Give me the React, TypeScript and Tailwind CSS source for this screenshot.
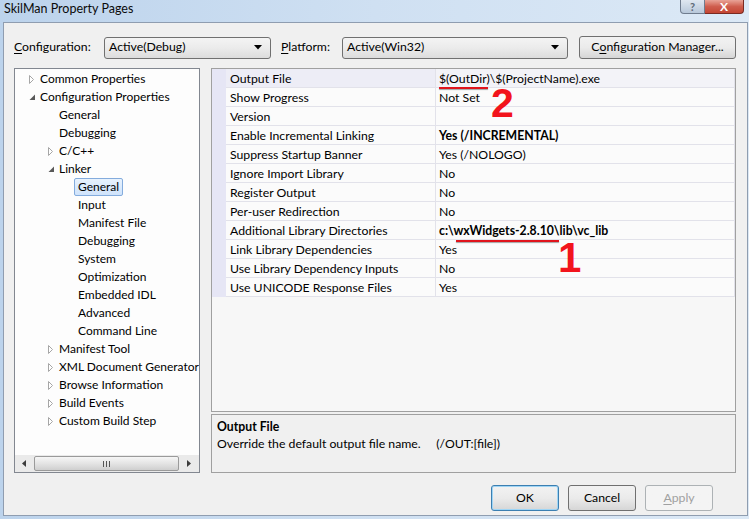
import React from "react";

type TreeItem = { label: string; level: number; exp?: "c" | "e"; sel?: boolean };

const tree: TreeItem[] = [
  { label: "Common Properties", level: 0, exp: "c" },
  { label: "Configuration Properties", level: 0, exp: "e" },
  { label: "General", level: 1 },
  { label: "Debugging", level: 1 },
  { label: "C/C++", level: 1, exp: "c" },
  { label: "Linker", level: 1, exp: "e" },
  { label: "General", level: 2, sel: true },
  { label: "Input", level: 2 },
  { label: "Manifest File", level: 2 },
  { label: "Debugging", level: 2 },
  { label: "System", level: 2 },
  { label: "Optimization", level: 2 },
  { label: "Embedded IDL", level: 2 },
  { label: "Advanced", level: 2 },
  { label: "Command Line", level: 2 },
  { label: "Manifest Tool", level: 1, exp: "c" },
  { label: "XML Document Generator", level: 1, exp: "c" },
  { label: "Browse Information", level: 1, exp: "c" },
  { label: "Build Events", level: 1, exp: "c" },
  { label: "Custom Build Step", level: 1, exp: "c" },
];

const props: { name: string; value: string; bold?: boolean }[] = [
  { name: "Output File", value: "$(OutDir)\\$(ProjectName).exe" },
  { name: "Show Progress", value: "Not Set" },
  { name: "Version", value: "" },
  { name: "Enable Incremental Linking", value: "Yes (/INCREMENTAL)", bold: true },
  { name: "Suppress Startup Banner", value: "Yes (/NOLOGO)" },
  { name: "Ignore Import Library", value: "No" },
  { name: "Register Output", value: "No" },
  { name: "Per-user Redirection", value: "No" },
  { name: "Additional Library Directories", value: "c:\\wxWidgets-2.8.10\\lib\\vc_lib", bold: true },
  { name: "Link Library Dependencies", value: "Yes" },
  { name: "Use Library Dependency Inputs", value: "No" },
  { name: "Use UNICODE Response Files", value: "Yes" },
];

const padFor = ["pl-[9px]", "pl-[28px]", "pl-[47px]"];

function Expander({ kind }: { kind?: "c" | "e" }) {
  return (
    <span className="w-[16px] h-[18px] flex items-center justify-center shrink-0">
      {kind === "c" && (
        <svg width="6" height="9" viewBox="0 0 6 9">
          <polygon points="0.5,0.5 4.5,4.5 0.5,8.5" fill="#fff" stroke="#a6a6a6" strokeWidth="1" />
        </svg>
      )}
      {kind === "e" && (
        <svg width="7" height="7" viewBox="0 0 7 7">
          <polygon points="6,0.5 6,6 0.5,6" fill="#595959" />
        </svg>
      )}
    </span>
  );
}

function DropArrow() {
  return (
    <svg width="8" height="5" viewBox="0 0 8 5">
      <polygon points="0,0 8,0 4,4.5" fill="#000" />
    </svg>
  );
}

function Combo({ w, text }: { w: string; text: string }) {
  return (
    <div
      className={`${w} h-[22px] rounded-[3px] border border-[#707070] bg-gradient-to-b from-[#f4f4f4] via-[#ebebeb] to-[#dcdcdc] flex items-center pl-[4px] pr-[8px] justify-between`}
    >
      <span>{text}</span>
      <DropArrow />
    </div>
  );
}

function Btn({ children, w, cls = "" }: { children: React.ReactNode; w: string; cls?: string }) {
  return (
    <div
      className={`${w} rounded-[3px] border flex items-center justify-center bg-gradient-to-b from-[#f2f2f2] via-[#ebebeb] to-[#d6d6d6] ${cls}`}
    >
      {children}
    </div>
  );
}

export default function App() {
  return (
    <div className="relative w-[749px] h-[519px] overflow-hidden bg-gradient-to-r from-[#bcd3ec] via-[#cfe0f2] to-[#dce9f6] text-[12.25px] leading-none text-black font-['Lato','Noto_Sans',sans-serif]">
      {/* Title bar */}
      <div className="h-[22px] flex items-start justify-between">
        <div className="pl-[4px] pt-[3px] text-[12.5px] text-[#0b0b0b]">SkilMan Property Pages</div>
        <div className="flex mr-[5px]">
          <div className="w-[25px] h-[14px] rounded-bl-[4px] border border-[#6f7c8e] border-t-0 bg-gradient-to-b from-[#dfe7f0] to-[#b8c8da] flex items-center justify-center text-[11px] font-bold text-[#5f6a78]">
            ?
          </div>
          <div className="w-[39px] h-[14px] rounded-br-[4px] border border-[#7a2a22] border-t-0 border-l-0 bg-gradient-to-b from-[#e8a397] via-[#cf5e4e] to-[#c44533] flex items-center justify-center text-[12px] font-bold text-white">
            X
          </div>
        </div>
      </div>

      {/* Window body */}
      <div className="ml-[3px] w-[745px] h-[494px] border border-[#8f9db0] bg-[#f0f0f0] flex flex-col">
        {/* Top row */}
        <div className="flex items-center h-[23px] mt-[13px] pl-[10px]">
          <span className="w-[90px]">
            <span className="underline underline-offset-2">C</span>onfiguration:
          </span>
          <Combo w="w-[167px]" text="Active(Debug)" />
          <span className="ml-[10px] w-[61px]">
            <span className="underline underline-offset-2">P</span>latform:
          </span>
          <Combo w="w-[226px]" text="Active(Win32)" />
          <Btn w="w-[157px] h-[23px] ml-[11px]" cls="border-[#707070]">
            C<span className="underline underline-offset-2">o</span>nfiguration Manager...
          </Btn>
        </div>

        {/* Main area */}
        <div className="flex mt-[9px] pl-[10px]">
          {/* Tree */}
          <div className="w-[186px] h-[405px] border border-[#828790] bg-[#fdfdfd] flex flex-col justify-between overflow-hidden text-[12px]">
            <div className="pt-[1px]">
              {tree.map((t, i) => (
                <div key={i} className={`h-[18px] flex items-center ${padFor[t.level]}`}>
                  <Expander kind={t.exp} />
                  {t.sel ? (
                    <span className="ml-[-4px] h-[18px] px-[3px] flex items-center rounded-[2px] border border-[#84acdd] bg-gradient-to-b from-[#e8f2fd] to-[#cfe3fb] whitespace-nowrap">
                      {t.label}
                    </span>
                  ) : (
                    <span className="whitespace-nowrap">{t.label}</span>
                  )}
                </div>
              ))}
            </div>
            {/* horizontal scrollbar */}
            <div className="h-[17px] shrink-0 bg-[#eaeaea] flex items-center">
              <div className="w-[18px] flex items-center justify-center">
                <svg width="4" height="7" viewBox="0 0 4 7">
                  <polygon points="4,0 4,7 0,3.5" fill="#3c3c3c" />
                </svg>
              </div>
              <div className="ml-[1px] w-[145px] h-[15px] rounded-[2px] border border-[#9a9a9a] bg-gradient-to-b from-[#f6f6f6] via-[#e4e4e4] to-[#cfcfcf] flex items-center justify-center gap-[1px]">
                <span className="w-[1px] h-[6px] bg-[#555]" />
                <span className="w-[1px] h-[6px] bg-[#555] ml-[1px]" />
                <span className="w-[1px] h-[6px] bg-[#555] ml-[1px]" />
              </div>
              <div className="flex-1 flex items-center justify-center">
                <svg width="4" height="7" viewBox="0 0 4 7">
                  <polygon points="0,0 4,3.5 0,7" fill="#3c3c3c" />
                </svg>
              </div>
            </div>
          </div>

          {/* Right side */}
          <div className="ml-[11px] w-[525px] flex flex-col">
            <div className="h-[344px] border border-[#a0a0a0] bg-[#f7f7f7]">
              {props.map((p, i) => (
                <div key={i} className="h-[19px] flex">
                  <div className="w-[14px] bg-[#e6e6f5]" />
                  <div
                    className={`w-[210px] pl-[4px] pt-[2px] flex items-center border-b border-r border-[#e2e2ea] ${
                      i === 0 ? "bg-[#ededf6]" : "bg-[#fbfbfb]"
                    }`}
                  >
                    {p.name}
                  </div>
                  <div
                    className={`flex-1 pl-[3px] pt-[2px] flex items-center border-b border-r border-[#e2e2ea] ${
                      i === 0 ? "bg-[#f3f3f8]" : "bg-[#fbfbfb]"
                    } ${p.bold ? "font-bold" : ""}`}
                  >
                    {p.value}
                  </div>
                </div>
              ))}
            </div>
            <div className="mt-[2px] h-[59px] border border-[#a0a0a0] bg-[#f0f0f0] pl-[5px] pt-[6px]">
              <div className="font-bold">Output File</div>
              <div className="mt-[5px] whitespace-pre">
                {"Override the default output file name.     (/OUT:[file])"}
              </div>
            </div>
          </div>
        </div>

        {/* Bottom buttons */}
        <div className="flex justify-end gap-[9px] mt-[12px] pr-[34px]">
          <Btn w="w-[68px] h-[26px]" cls="border-[#3c7fb1] shadow-[inset_0_0_0_1px_#9fd5f5]">
            OK
          </Btn>
          <Btn w="w-[68px] h-[26px]" cls="border-[#707070]">
            Cancel
          </Btn>
          <Btn w="w-[68px] h-[26px]" cls="border-[#adb2b5] from-[#f4f4f4] via-[#f4f4f4] to-[#f4f4f4] text-[#a0a0a0]">
            <span className="underline underline-offset-2">A</span>pply
          </Btn>
        </div>
      </div>

      {/* Red annotations */}
      <div className="absolute left-[439px] top-[87px] w-[49px] h-[2px] bg-[#e0141c] shadow-[0_1px_1px_rgba(0,0,0,0.35)]" />
      <div className="absolute left-[491px] top-[89px] h-[28px] text-[41px] leading-[28px] font-bold text-[#f2141c] font-['Liberation_Sans',sans-serif]">
        2
      </div>
      <div className="absolute left-[456px] top-[240px] w-[103px] h-[2px] bg-[#e0141c] shadow-[0_1px_1px_rgba(0,0,0,0.35)]" />
      <div className="absolute left-[558px] top-[242px] h-[31px] text-[42px] leading-[31px] font-bold text-[#f2141c] font-['Liberation_Sans',sans-serif]">
        1
      </div>
    </div>
  );
}
